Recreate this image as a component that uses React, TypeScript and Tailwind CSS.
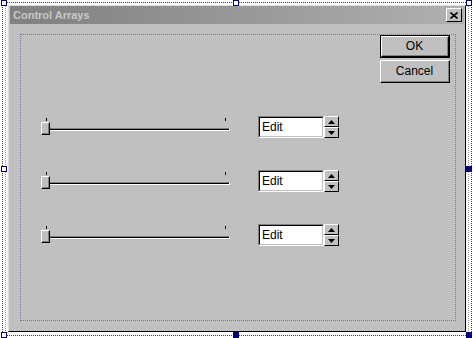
import React from "react";

const font = { fontFamily: '"Liberation Sans", Arial, sans-serif' };

function Handle({ className, filled }: { className: string; filled?: boolean }) {
  return (
    <div
      className={
        "absolute w-[6px] h-[6px] border border-[#000080] " +
        (filled ? "bg-[#000080] " : "bg-white ") +
        className
      }
    />
  );
}

function Slider() {
  return (
    <div className="relative w-[190px] h-[22px]">
      <div className="absolute left-[5px] top-[2px] w-[1px] h-[3px] bg-black" />
      <div className="absolute left-[184px] top-[2px] w-[1px] h-[3px] bg-black" />
      <div className="absolute left-[2px] top-[12px] w-[187px] h-[3px] border-t border-l border-[#808080] border-b border-r border-b-white border-r-white bg-black" />
      <div className="absolute left-[3px] top-[13px] w-[185px] h-[1px] bg-black" />
      <div className="absolute left-0 top-[6px] w-[9px] h-[13px] bg-[#c0c0c0] border-t border-l border-white border-r border-b border-r-black border-b-black">
        <div className="w-full h-full border-r border-b border-[#808080]" />
      </div>
    </div>
  );
}

function Spinner() {
  return (
    <div className="flex flex-col w-[15px] h-[22px]">
      {[0, 1].map((i) => (
        <div
          key={i}
          className="flex-1 bg-[#c0c0c0] border-t border-l border-white border-r border-b border-r-black border-b-black flex items-center justify-center"
        >
          <svg width="7" height="4" viewBox="0 0 7 4">
            {i === 0 ? (
              <polygon points="3.5,0 7,4 0,4" fill="black" />
            ) : (
              <polygon points="0,0 7,0 3.5,4" fill="black" />
            )}
          </svg>
        </div>
      ))}
    </div>
  );
}

function EditBox() {
  return (
    <div className="flex">
      <div className="w-[66px] h-[22px] border-t border-l border-[#808080] border-b border-r border-b-white border-r-white">
        <div className="w-full h-full bg-white border-t border-l border-black border-b border-r border-b-[#c0c0c0] border-r-[#c0c0c0] flex items-center pl-[2px] text-[12px] text-black">
          Edit
        </div>
      </div>
      <Spinner />
    </div>
  );
}

function Row() {
  return (
    <div className="flex items-center h-[22px]">
      <div className="w-[20px]" />
      <Slider />
      <div className="w-[27px]" />
      <EditBox />
    </div>
  );
}

function Btn({ label, def }: { label: string; def?: boolean }) {
  return (
    <div className={"w-[70px] h-[23px] " + (def ? "border border-black" : "")}>
      <div className="w-full h-full bg-[#c0c0c0] border-t border-l border-white border-r border-b border-r-black border-b-black">
        <div className="w-full h-full border-r border-b border-[#808080] flex items-center justify-center text-[12px] text-black">
          {label}
        </div>
      </div>
    </div>
  );
}

export default function App() {
  return (
    <div className="w-[474px] h-[338px] bg-white relative overflow-hidden" style={font}>
      <div className="absolute left-[2px] top-[2px] w-[470px] h-[334px] border border-dotted border-[#404040]" />
      <div className="absolute left-[5px] top-[1px] w-[464px] h-[336px] border-x border-dotted border-[#a0a0a0]" />

      <div className="absolute left-[8px] top-[5px] w-[458px] h-[327px] flex flex-col bg-[#c0c0c0] border-t border-l border-[#dfdfdf] border-r border-b border-r-black border-b-black">
        <div className="h-[18px] mx-[1px] bg-gradient-to-r from-[#808080] to-[#b0b0b0] flex items-center justify-between pl-[3px] pr-[2px]">
          <span className="text-[11px] font-bold text-[#c8c8c8]">Control Arrays</span>
          <div className="w-[16px] h-[14px] bg-[#c0c0c0] border-t border-l border-white border-r border-b border-r-black border-b-black flex items-center justify-center">
            <svg width="8" height="7" viewBox="0 0 8 7">
              <path d="M0.5 0.5 L7.5 6.5 M7.5 0.5 L0.5 6.5" stroke="black" strokeWidth="1.6" />
            </svg>
          </div>
        </div>
        <div className="flex-1 pl-[11px] pt-[10px]">
          <div className="w-[436px] h-[287px] border border-dotted border-[#7070c0] flex flex-col">
            <div className="flex justify-end pr-[5px]">
              <div className="flex flex-col gap-[2px]">
                <Btn label="OK" def />
                <Btn label="Cancel" />
              </div>
            </div>
            <div className="flex flex-col gap-[32px] mt-[33px]">
              <Row />
              <Row />
              <Row />
            </div>
          </div>
        </div>
      </div>

      <Handle className="left-[1px] top-0" />
      <Handle className="left-[233px] top-0" />
      <Handle className="left-[466px] top-0" />
      <Handle className="left-[1px] top-[166px]" />
      <Handle className="left-[466px] top-[166px]" filled />
      <Handle className="left-[1px] top-[332px]" />
      <Handle className="left-[233px] top-[332px]" filled />
      <Handle className="left-[466px] top-[332px]" filled />
    </div>
  );
}
